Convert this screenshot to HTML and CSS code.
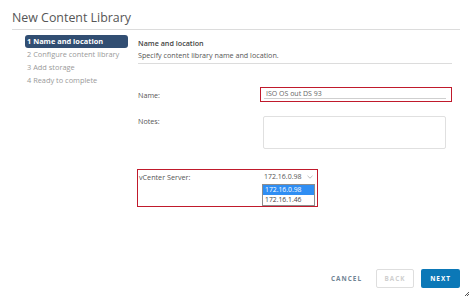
FILE: index.html
```html
<!DOCTYPE html>
<html lang="en">
<head>
    <meta charset="UTF-8">
    <meta name="viewport" content="width=device-width, initial-scale=1.0">
    <title>New Content Library</title>
    <link rel="stylesheet" href="styles.css">
</head>
<body>
    <div class="dialog">
        <h1 class="title">New Content Library</h1>

        <div class="wizard">
            <ul class="steps">
                <li class="step active">1 Name and location</li>
                <li class="step">2 Configure content library</li>
                <li class="step">3 Add storage</li>
                <li class="step">4 Ready to complete</li>
            </ul>

            <div class="content">
                <div class="section-head">
                    <div class="section-title">Name and location</div>
                    <div class="section-desc">Specify content library name and location.</div>
                </div>

                <div class="row name-row">
                    <label class="label">Name:</label>
                    <div class="mark name-mark">
                        <div class="text-input">ISO OS out DS 93</div>
                    </div>
                </div>

                <div class="row notes-row">
                    <label class="label">Notes:</label>
                    <div class="textarea"></div>
                </div>

                <div class="mark vc-mark">
                    <label class="label">vCenter Server:</label>
                    <div class="select-wrap">
                        <div class="select">
                            <span>172.16.0.98</span>
                            <svg class="caret" width="6" height="4" viewBox="0 0 6 4">
                                <path d="M0.5 0.8 L3 3.2 L5.5 0.8" fill="none" stroke="#b5b5b5" stroke-width="0.9"/>
                            </svg>
                        </div>
                        <ul class="options">
                            <li class="option selected">172.16.0.98</li>
                            <li class="option">172.16.1.46</li>
                        </ul>
                    </div>
                </div>
            </div>
        </div>

        <div class="footer">
            <button class="btn btn-link">CANCEL</button>
            <button class="btn btn-outline" disabled>BACK</button>
            <button class="btn btn-primary">NEXT</button>
        </div>

        <svg class="grip" width="6" height="6" viewBox="0 0 6 6">
            <path d="M5 1 L1 5 M5 3 L3 5" stroke="#555" stroke-width="1"/>
        </svg>
    </div>
</body>
</html>
```

FILE: styles.css
```css
body {
    margin: 0;
    font-family: "Open Sans", Lato, sans-serif;
    background-color: #fff;
    color: #565656;
}

.dialog {
    position: relative;
    width: 474px;
    height: 302px;
    overflow: hidden;
}

.title {
    margin: 0 14px 0 12px;
    padding-top: 8px;
    height: 21px;
    line-height: 20px;
    font-size: 12.4px;
    font-weight: 400;
    color: #565656;
    border-bottom: 1px solid #dcdcdc;
}

.wizard {
    display: flex;
    margin-top: 5px;
}

.steps {
    list-style: none;
    margin: 0 0 0 25px;
    padding: 0;
    width: 103px;
}

.step {
    height: 13px;
    line-height: 13px;
    padding-left: 2px;
    font-size: 7.4px;
    color: #9a9a9a;
    white-space: nowrap;
}

.step.active {
    background-color: #314e72;
    color: #fff;
    font-weight: 700;
    border-radius: 3px;
}

.content {
    margin-left: 10px;
    width: 314px;
}

.section-head {
    padding: 2px 0 2px;
    border-bottom: 1px solid #dcdcdc;
}

.section-title,
.section-desc {
    height: 12px;
    line-height: 12px;
    font-size: 7.2px;
}

.section-title {
    font-weight: 600;
    color: #444;
}

.label {
    font-size: 7.2px;
    color: #565656;
}

.row {
    display: flex;
}

.name-row {
    margin-top: 23px;
    align-items: center;
}

.name-row .label {
    width: 122px;
}

.mark {
    border: 1.5px solid #c01a2c;
    box-sizing: border-box;
}

.name-mark {
    width: 192px;
    height: 15px;
    padding: 1px 5px 0 3px;
}

.text-input {
    height: 10px;
    line-height: 9px;
    padding-left: 2px;
    font-size: 7px;
    color: #666;
    border-bottom: 1px solid #cfcfcf;
    box-sizing: border-box;
}

.notes-row {
    margin-top: 14px;
}

.notes-row .label {
    width: 125px;
    line-height: 10px;
}

.textarea {
    width: 183px;
    height: 33px;
    box-sizing: border-box;
    border: 1px solid #e0e0e0;
    border-radius: 2px;
}

.vc-mark {
    display: flex;
    margin-top: 20px;
    margin-left: -1px;
    width: 181px;
    height: 38px;
    padding: 2px 0 0 1px;
}

.vc-mark .label {
    width: 124px;
    line-height: 10px;
}

.select {
    display: flex;
    align-items: center;
    width: 50px;
    height: 10px;
    line-height: 10px;
    padding-left: 1px;
    font-size: 7px;
    color: #555;
}

.caret {
    margin-left: 5px;
}

.options {
    list-style: none;
    margin: 2px 0 0 -1px;
    padding: 0;
    width: 51px;
    border: 1px solid #8d8d8d;
    background-color: #fff;
}

.option {
    height: 10px;
    line-height: 10px;
    padding-left: 2px;
    font-size: 6.8px;
    color: #444;
    overflow: hidden;
}

.option.selected {
    background-color: #2f8ef3;
    color: #fff;
}

.footer {
    display: flex;
    justify-content: flex-end;
    align-items: center;
    margin-top: 62px;
    padding-right: 14px;
}

.btn {
    height: 19px;
    padding: 0;
    font-family: "Open Sans", Lato, sans-serif;
    font-size: 6.4px;
    font-weight: 700;
    letter-spacing: 1px;
    border-radius: 2px;
    background: transparent;
    border: none;
}

.btn-link {
    margin-right: 14px;
    color: #6f8494;
}

.btn-outline {
    width: 38px;
    margin-right: 7px;
    border: 1px solid #dedede;
    color: #cfcfcf;
}

.btn-primary {
    width: 39px;
    background-color: #0b78b7;
    color: #fff;
}

.grip {
    position: absolute;
    right: 4px;
    bottom: 5px;
}
```
